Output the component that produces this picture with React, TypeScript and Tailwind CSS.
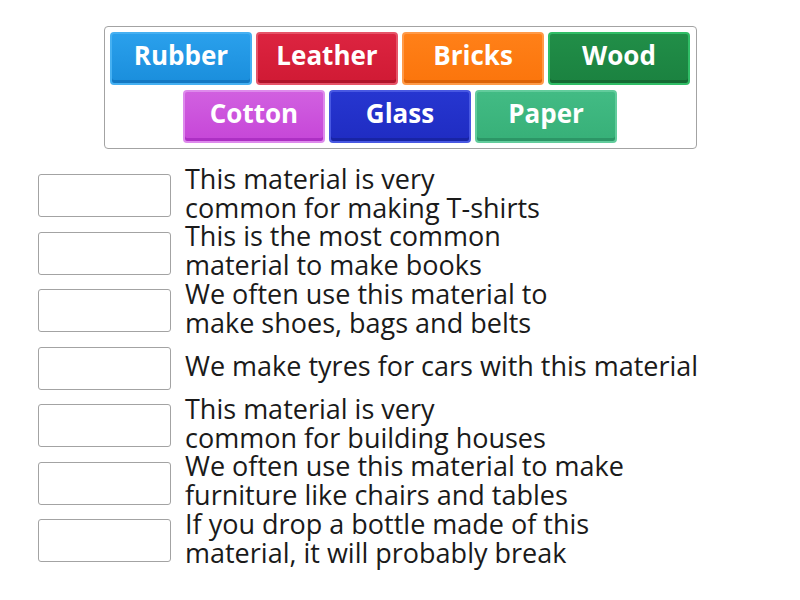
import React from "react";

const tiles = [
  { label: "Rubber", cls: "bg-[linear-gradient(#2aa0ec,#1a8edc)] border-[#45b0f2] shadow-[inset_0_-3px_0_#1478c2]" },
  { label: "Leather", cls: "bg-[linear-gradient(#dc2440,#d01a34)] border-[#e65468] shadow-[inset_0_-3px_0_#b0142a]" },
  { label: "Bricks", cls: "bg-[linear-gradient(#ff8018,#fb750c)] border-[#ff9a48] shadow-[inset_0_-3px_0_#dc6208]" },
  { label: "Wood", cls: "bg-[linear-gradient(#218e48,#1b8240)] border-[#30bd66] shadow-[inset_0_-3px_0_#156a33]" },
  { label: "Cotton", cls: "bg-[linear-gradient(#d160e0,#c646d8)] border-[#de8aec] shadow-[inset_0_-3px_0_#ad30c4]" },
  { label: "Glass", cls: "bg-[linear-gradient(#2636d0,#1f2cc2)] border-[#4858e2] shadow-[inset_0_-3px_0_#1824a4]" },
  { label: "Paper", cls: "bg-[linear-gradient(#42bb84,#37b078)] border-[#62cc9c] shadow-[inset_0_-3px_0_#2c9666]" },
];

const rows: string[][] = [
  ["This material is very", "common for making T-shirts"],
  ["This is the most common", "material to make books"],
  ["We often use this material to", "make shoes, bags and belts"],
  ["We make tyres for cars with this material"],
  ["This material is very", "common for building houses"],
  ["We often use this material to make", "furniture like chairs and tables"],
  ["If you drop a bottle made of this", "material, it will probably break"],
];

export default function App() {
  return (
    <div className="w-[800px] h-[600px] bg-white pt-[26px] font-['Open_Sans',sans-serif]">
      <div className="w-[593px] mx-auto border border-[#a3a3a3] rounded-[4px] px-[5px] py-[5px] flex flex-wrap justify-center gap-x-[4px] gap-y-[5px]">
        {tiles.map((t) => (
          <div
            key={t.label}
            className={`w-[142px] h-[53px] rounded-[4px] border-2 ${t.cls} flex items-center justify-center text-white font-bold text-[26px] leading-none pb-[7px]`}
          >
            {t.label}
          </div>
        ))}
      </div>
      <div className="mt-[18px] flex flex-col">
        {rows.map((r, i) => (
          <div key={i} className="h-[57.5px] flex items-center">
            <div className="ml-[38px] w-[133px] h-[43px] border border-[#a3a3a3] rounded-[3px] shrink-0" />
            <div className="ml-[14px] pb-[6px] text-[27px] leading-[29px] text-[#1a1a1a] whitespace-nowrap">
              {r.map((l, j) => (
                <div key={j}>{l}</div>
              ))}
            </div>
          </div>
        ))}
      </div>
    </div>
  );
}
